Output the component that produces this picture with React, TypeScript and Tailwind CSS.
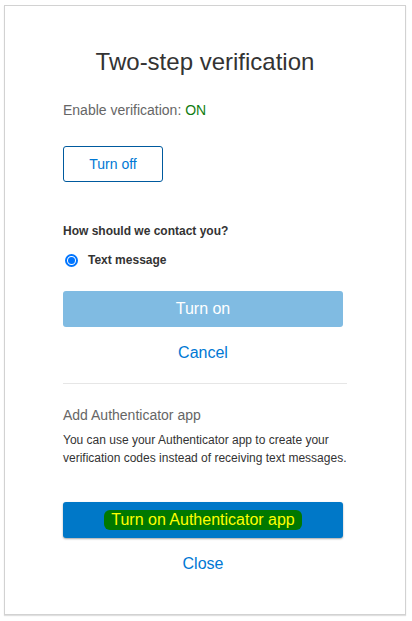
export default function App() {
  return (
    <div className="min-h-screen bg-white pl-[4px] pt-[5px] font-['Liberation_Sans',Arial,sans-serif]">
      <div className="flex h-[610px] w-[402px] flex-col border border-[#d2d2d2] bg-white shadow-[0_1px_1px_rgba(0,0,0,0.12)]">
        <h1 className="mt-[40px] text-center text-[24px] leading-[32px] font-normal text-[#333]">
          Two-step verification
        </h1>

        <div className="ml-[58px] flex w-[284px] flex-col">
          <p className="mt-[22px] text-[14px] leading-[20px] text-[#666]">
            Enable verification: <span className="text-[#107c10]">ON</span>
          </p>

          <button className="mt-[26px] h-[36px] w-[100px] rounded-[3px] border border-[#005a9e] text-[14px] text-[#0078d4]">
            Turn off
          </button>

          <p className="mt-[41px] text-[12px] leading-[16px] font-bold text-[#333]">How should we contact you?</p>

          <label className="mt-[13px] flex items-center gap-[10px] text-[12px] leading-[16px] font-bold text-[#333]">
            <span className="ml-[2px] flex h-[13px] w-[13px] items-center justify-center rounded-full border-2 border-[#0075ff]">
              <span className="h-[7px] w-[7px] rounded-full bg-[#0075ff]" />
            </span>
            Text message
          </label>

          <button className="mt-[23px] h-[36px] w-[280px] rounded-[3px] bg-[#80bbe2] text-[16px] text-white">
            Turn on
          </button>

          <button className="mt-[16px] w-[280px] text-center text-[16px] leading-[20px] text-[#0078d4]">Cancel</button>

          <hr className="mt-[20px] border-t border-[#e6e6e6]" />

          <p className="mt-[21px] text-[14px] leading-[20px] text-[#666]">Add Authenticator app</p>
          <p className="mt-[6px] text-[12px] leading-[18px] text-[#333]">
            You can use your Authenticator app to create your verification codes instead of receiving text messages.
          </p>

          <button className="mt-[35px] flex h-[36px] w-[280px] items-center justify-center rounded-[3px] bg-[#0078c8] shadow-[0_1px_2px_rgba(0,0,0,0.35)]">
            <span className="rounded-[6px] bg-[#007800] px-[7px] text-[16px] leading-[20px] text-[#ffff00]">
              Turn on Authenticator app
            </span>
          </button>

          <button className="mt-[16px] w-[280px] text-center text-[16px] leading-[20px] text-[#0078d4]">Close</button>
        </div>
      </div>
    </div>
  );
}
